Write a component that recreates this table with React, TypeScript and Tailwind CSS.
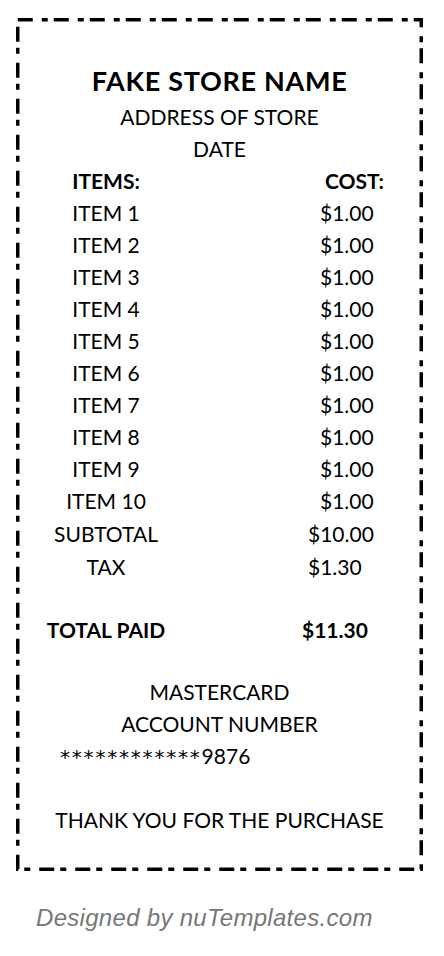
const items = ["ITEM 1", "ITEM 2", "ITEM 3", "ITEM 4", "ITEM 5", "ITEM 6", "ITEM 7", "ITEM 8", "ITEM 9", "ITEM 10"];

function Row({ label, cost, costClass, bold }: { label: string; cost: string; costClass: string; bold?: boolean }) {
  return (
    <div className={`flex leading-[32px] ${bold ? "font-bold" : ""}`}>
      <div className="w-[180px] text-center">{label}</div>
      <div className={`ml-[104px] ${costClass}`}>{cost}</div>
    </div>
  );
}

export default function App() {
  return (
    <div className="min-h-[956px] w-[444px] bg-white text-black font-['Lato',sans-serif]">
      <div className="pt-[18px] pl-[16px]">
        <div className="relative w-[407px] h-[853px]">
          <svg className="absolute inset-0" width="407" height="853" viewBox="0 0 407 853">
            <rect
              x="1.75"
              y="1.75"
              width="403.5"
              height="849.5"
              fill="none"
              stroke="#000"
              strokeWidth="3.5"
              strokeDasharray="15 9 6 6"
            />
          </svg>
          <div className="relative flex flex-col pt-[45px] text-[21px]">
            <div className="text-center text-[27px] font-bold leading-[36px] tracking-[0.7px]">FAKE STORE NAME</div>
            <div className="mt-[2px] text-center leading-[32px]">ADDRESS OF STORE</div>
            <div className="text-center leading-[32px]">DATE</div>
            <Row label="ITEMS:" cost="COST:" costClass="pl-[25px]" bold />
            {items.map((it) => (
              <Row key={it} label={it} cost="$1.00" costClass="pl-[20px]" />
            ))}
            <div className="mt-[1px]">
              <Row label="SUBTOTAL" cost="$10.00" costClass="pl-[8px]" />
            </div>
            <div className="mt-[1px]">
              <Row label="TAX" cost="$1.30" costClass="pl-[8px]" />
            </div>
            <div className="mt-[31px]">
              <Row label="TOTAL PAID" cost="$11.30" costClass="pl-[2px]" bold />
            </div>
            <div className="mt-[30px] text-center leading-[32px]">MASTERCARD</div>
            <div className="text-center leading-[32px]">ACCOUNT NUMBER</div>
            <div className="pl-[44px] leading-[32px]">
              <span className="font-['DejaVu_Sans',sans-serif] text-[20px] tracking-[1.8px]">************</span>
              9876
            </div>
            <div className="mt-[31px] text-center leading-[32px]">THANK YOU FOR THE PURCHASE</div>
          </div>
        </div>
      </div>
      <div className="mt-[34px] pl-[36px] font-['Liberation_Sans',Arial,sans-serif] text-[24px] italic leading-[26px] tracking-[0.3px] text-[#777777]">
        Designed by nuTemplates.com
      </div>
    </div>
  );
}
